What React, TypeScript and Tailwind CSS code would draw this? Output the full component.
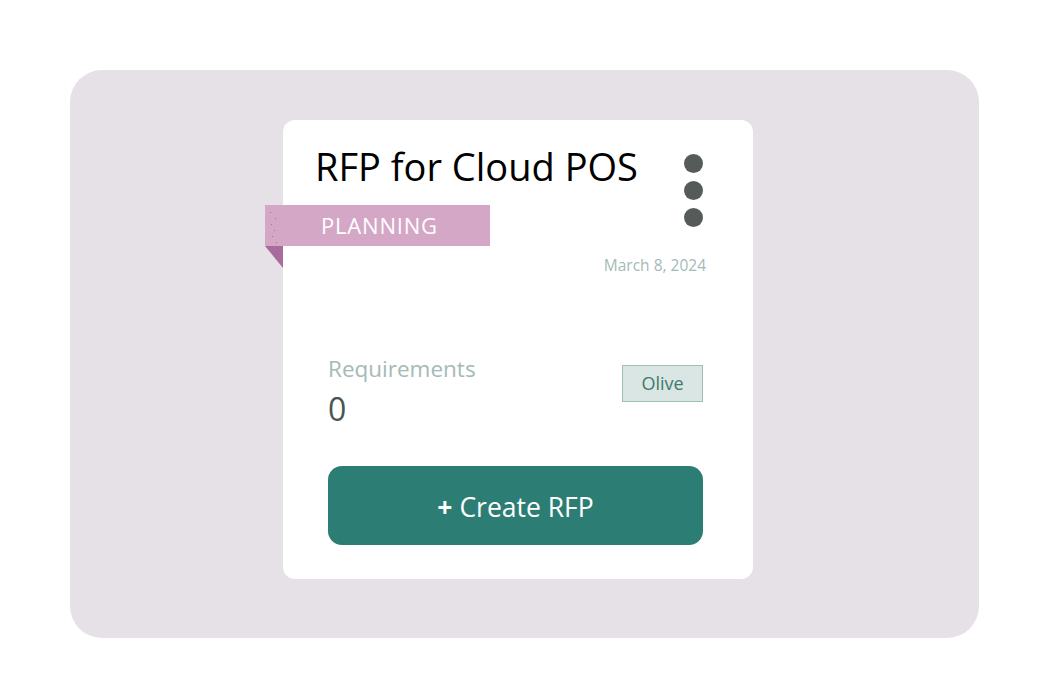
export default function App() {
  return (
    <div className="min-h-[700px] w-[1050px] bg-white pt-[70px] pl-[70px] font-['Open_Sans',sans-serif]">
      <div className="flex h-[568px] w-[909px] rounded-[32px] bg-[#e6e1e7] pt-[50px] pl-[213px]">
        <div className="relative flex h-[459px] w-[470px] flex-col rounded-[12px] bg-white">
          {/* Title + menu */}
          <div className="flex items-start justify-between pt-[20px] pl-[32px] pr-[50px]">
            <h1 className="text-[38px] leading-[52px] text-black">RFP for Cloud POS</h1>
            <div className="mt-[14px] flex flex-col gap-[8px]">
              <span className="h-[19px] w-[19px] rounded-full bg-[#545b59]" />
              <span className="h-[19px] w-[19px] rounded-full bg-[#545b59]" />
              <span className="h-[19px] w-[19px] rounded-full bg-[#545b59]" />
            </div>
          </div>

          {/* Status ribbon */}
          <div className="absolute top-[85px] left-[-18px]">
            <div className="relative flex h-[41px] w-[225px] items-center bg-[#d4a7c6] pl-[56px]">
              <span className="text-[22px] tracking-[0.8px] text-white">PLANNING</span>
              <div className="absolute top-[7px] left-[4px] flex flex-col gap-[5px]">
                <span className="ml-[1px] h-[1px] w-[1px] bg-[#a96b9b]" />
                <span className="ml-[6px] h-[1px] w-[1px] bg-[#a96b9b]" />
                <span className="ml-[2px] h-[1px] w-[1px] bg-[#a96b9b]" />
                <span className="ml-[5px] h-[1px] w-[1px] bg-[#a96b9b]" />
                <span className="ml-[3px] h-[1px] w-[1px] bg-[#a96b9b]" />
                <span className="ml-[7px] h-[1px] w-[1px] bg-[#a96b9b]" />
              </div>
            </div>
            <svg width="18" height="22" viewBox="0 0 18 22" className="block">
              <polygon points="0,0 18,0 18,22" fill="#a96b9b" />
            </svg>
          </div>

          {/* Date */}
          <div className="mt-[27px] pr-[47px] text-right text-[15.5px] leading-[22px] text-[#a4bab5]">
            March 8, 2024
          </div>

          {/* Requirements */}
          <div className="mt-[79px] flex items-start justify-between pl-[45px] pr-[50px]">
            <div className="flex flex-col">
              <span className="text-[22.5px] leading-[28px] text-[#a4bab5]">Requirements</span>
              <span className="mt-[6px] text-[32px] leading-[40px] text-[#4a5553]">0</span>
            </div>
            <span className="mt-[10px] flex h-[37px] w-[81px] items-center justify-center border border-[#9ebfb6] bg-[#d9e6e3] text-[18px] text-[#3c7a6e]">
              Olive
            </span>
          </div>

          {/* Create button */}
          <div className="mt-[37px] pl-[45px] pr-[50px]">
            <button className="flex h-[79px] w-full items-center justify-center rounded-[14px] bg-[#2c7d74] pt-[4px] text-[26.5px] text-white">
              <span className="mr-[7px] font-bold">+</span>Create RFP
            </button>
          </div>
        </div>
      </div>
    </div>
  );
}
